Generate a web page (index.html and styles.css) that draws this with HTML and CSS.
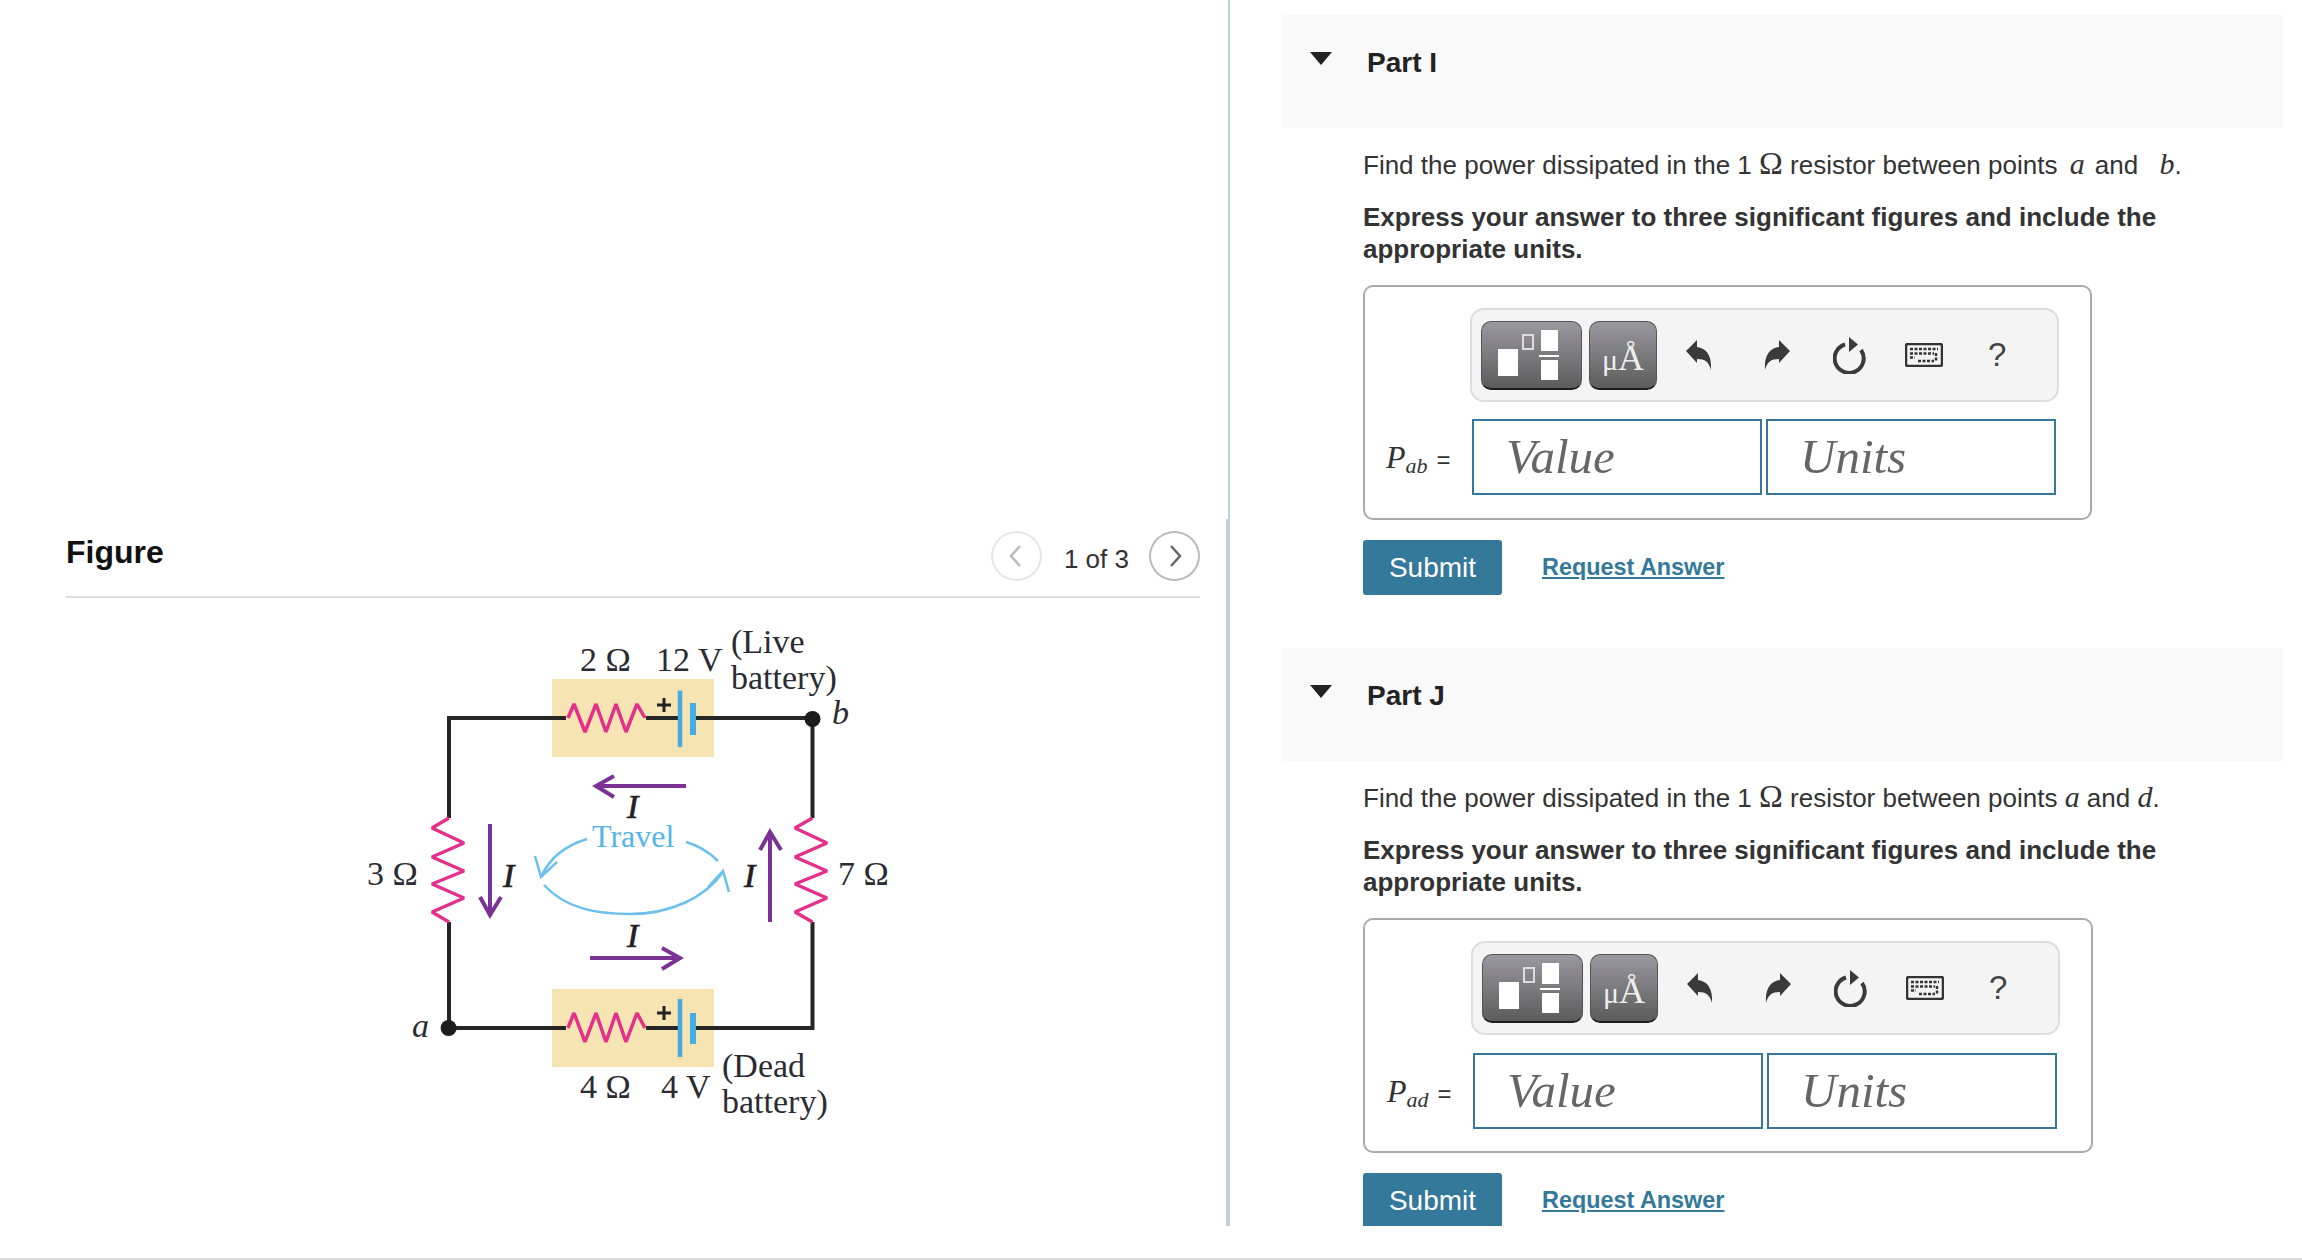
FILE: index.html
```html
<!DOCTYPE html>
<html lang="en">
<head>
<meta charset="utf-8">
<title>Figure and parts</title>
<link rel="stylesheet" href="styles.css">
</head>
<body>
<div class="page">
  <aside class="left">
    <header class="fig-head">
      <h2 class="fig-title">Figure</h2>
      <nav class="pager">
        <span class="nav-btn nav-off"><svg width="16" height="26" viewBox="0 0 16 26"><path d="M12 3 3 13l9 10" class="chev"/></svg></span>
        <span class="pager-text">1 of 3</span>
        <span class="nav-btn nav-on"><svg width="16" height="26" viewBox="0 0 16 26"><path d="M4 3l9 10-9 10" class="chev"/></svg></span>
      </nav>
    </header>
    <div class="figure">
      <svg class="circuit" width="560" height="540" viewBox="340 620 560 540">
        <rect class="tan" x="552" y="679" width="162" height="78"/>
        <rect class="tan" x="552" y="989" width="162" height="78"/>
        <path class="wire" d="M566 718H449V818M646 718H678M693 718H812.5V818M449 922V1028H566M646 1028H678M693 1028H812.5V922"/>
        <circle class="dot" cx="812.5" cy="719" r="8"/>
        <circle class="dot" cx="448.6" cy="1028" r="8"/>
        <path class="res" d="M568 718 574 704 585 732 596 704 606 732 616 704 626 732 637 704 645 718"/>
        <path class="res" d="M568 1028 574 1013 585 1042 596 1013 606 1042 616 1013 626 1042 637 1013 645 1028"/>
        <path class="res" d="M449 818 432 828 464 843 432 857 464 871 432 884 464 898 432 912 449 922"/>
        <path class="res" d="M812.5 818 795 828 827 843 795 857 827 871 795 884 827 898 795 912 812.5 922"/>
        <path class="plate" d="M680 690.5V747M680 999V1057"/>
        <path class="plate wide" d="M693 703V735M693 1013V1044"/>
        <path class="plus" d="M657 705H671M664 698V712M657 1013H671M664 1006V1020"/>
        <path class="arrow" d="M686 786H596M614 776 596 786 614 797"/>
        <path class="arrow" d="M590 958H680M662 948 680 958 662 969"/>
        <path class="arrow" d="M490 824V915M480 897 490 915 501 897"/>
        <path class="arrow" d="M770 922V832M760 850 770 832 781 850"/>
        <path class="loop" d="M587 839C567 845 550 857 541 877M535 856 541 877 557 862M686 842C700 846 710 853 718 861M544 885C565 908 595 914 630 914C670 914 705 898 723 872M708 887 723 871 729 892"/>
        <text class="lbl" x="580" y="671">2 Ω</text>
        <text class="lbl" x="656" y="671">12 V</text>
        <text class="lbl" x="731" y="653">(Live</text>
        <text class="lbl" x="731" y="689">battery)</text>
        <text class="lbl ital" x="832" y="724">b</text>
        <text class="lbl" x="367" y="885">3 Ω</text>
        <text class="lbl" x="838" y="885">7 Ω</text>
        <text class="lbl ital" x="412" y="1037">a</text>
        <text class="lbl" x="580" y="1098">4 Ω</text>
        <text class="lbl" x="661" y="1098">4 V</text>
        <text class="lbl" x="722" y="1077">(Dead</text>
        <text class="lbl" x="722" y="1113">battery)</text>
        <text class="cur" x="627" y="818">I</text>
        <text class="cur" x="627" y="947">I</text>
        <text class="cur" x="503" y="887">I</text>
        <text class="cur" x="744" y="887">I</text>
        <text class="travel" x="592" y="847">Travel</text>
      </svg>
    </div>
  </aside>
  <main class="right">
    <section class="part">
      <header class="part-head"><span class="tri"></span><h3 class="part-title">Part I</h3></header>
      <div class="part-body">
        <p class="q">Find the power dissipated in the 1 <span class="m-om">Ω</span> resistor between points <span class="m m-a">a</span> and <span class="m m-b">b</span>.</p>
        <p class="ins">Express your answer to three significant figures and include the appropriate units.</p>
        <div class="answer">
          <div class="toolbar">
            <span class="tbtn tbtn-tpl"><svg class="tpl" width="99" height="66" viewBox="0 0 99 66"><rect class="wf" x="16" y="27" width="20" height="27"/><rect class="wo" x="41" y="13" width="10" height="14"/><rect class="wf" x="59" y="8" width="17" height="21"/><rect class="wf" x="57" y="33" width="20" height="2"/><rect class="wf" x="59" y="38" width="17" height="20"/></svg></span>
            <span class="tbtn tbtn-unit"><span class="mu">μ</span>Å</span>
            <svg class="ic" width="28" height="32" viewBox="0 0 28 32"><path class="fillic" d="M1 12 12 1v7c9 1 15 8 14 23-2-8-6-11-14-11v4z"/></svg>
            <svg class="ic ic-redo" width="28" height="32" viewBox="0 0 28 32"><path class="fillic" d="M27 12 16 1v7C7 9 1 16 2 31c2-8 6-11 14-11v4z"/></svg>
            <svg class="ic ic-ref" width="33" height="37" viewBox="0 0 33 37"><path class="strokeic" d="M28 13A14.500 14.500 0 1 1 12 7.500"/><path class="fillic" d="M16 0l9 7.500-9 7.500z"/></svg>
            <svg class="ic ic-key" width="38" height="24" viewBox="0 0 38 24"><rect class="keyb" x="1" y="1" width="36" height="22" rx="2"/><path class="keys" d="M5 6h28M5 10.500h24M5 14.500h5M13 18h16M31 10v8"/></svg>
            <span class="help">?</span>
          </div>
          <div class="row">
            <span class="var"><i>P</i><i class="sub">ab</i><span class="eq">=</span></span>
            <div class="field">Value</div>
            <div class="field">Units</div>
          </div>
        </div>
        <div class="actions"><span class="submit">Submit</span><a class="req" href="#">Request Answer</a></div>
      </div>
    </section>
    <section class="part part-j">
      <header class="part-head"><span class="tri"></span><h3 class="part-title">Part J</h3></header>
      <div class="part-body">
        <p class="q">Find the power dissipated in the 1 <span class="m-om">Ω</span> resistor between points <span class="m">a</span> and <span class="m">d</span>.</p>
        <p class="ins">Express your answer to three significant figures and include the appropriate units.</p>
        <div class="answer">
          <div class="toolbar">
            <span class="tbtn tbtn-tpl"><svg class="tpl" width="99" height="66" viewBox="0 0 99 66"><rect class="wf" x="16" y="27" width="20" height="27"/><rect class="wo" x="41" y="13" width="10" height="14"/><rect class="wf" x="59" y="8" width="17" height="21"/><rect class="wf" x="57" y="33" width="20" height="2"/><rect class="wf" x="59" y="38" width="17" height="20"/></svg></span>
            <span class="tbtn tbtn-unit"><span class="mu">μ</span>Å</span>
            <svg class="ic" width="28" height="32" viewBox="0 0 28 32"><path class="fillic" d="M1 12 12 1v7c9 1 15 8 14 23-2-8-6-11-14-11v4z"/></svg>
            <svg class="ic ic-redo" width="28" height="32" viewBox="0 0 28 32"><path class="fillic" d="M27 12 16 1v7C7 9 1 16 2 31c2-8 6-11 14-11v4z"/></svg>
            <svg class="ic ic-ref" width="33" height="37" viewBox="0 0 33 37"><path class="strokeic" d="M28 13A14.500 14.500 0 1 1 12 7.500"/><path class="fillic" d="M16 0l9 7.500-9 7.500z"/></svg>
            <svg class="ic ic-key" width="38" height="24" viewBox="0 0 38 24"><rect class="keyb" x="1" y="1" width="36" height="22" rx="2"/><path class="keys" d="M5 6h28M5 10.500h24M5 14.500h5M13 18h16M31 10v8"/></svg>
            <span class="help">?</span>
          </div>
          <div class="row">
            <span class="var"><i>P</i><i class="sub">ad</i><span class="eq">=</span></span>
            <div class="field">Value</div>
            <div class="field">Units</div>
          </div>
        </div>
        <div class="actions"><span class="submit">Submit</span><a class="req" href="#">Request Answer</a></div>
      </div>
    </section>
  </main>
</div>
</body>
</html>
```
FILE: styles.css
```css
* { box-sizing: border-box; }
html, body { margin: 0; height: 100%; background: #fff; overflow: hidden; }
body { font-family: "Liberation Sans", Arial, sans-serif; color: #333; height: 1260px; border-bottom: 2px solid #ddd; }
.page { display: flex; height: 1226px; overflow: hidden; }
.left { width: 1228px; flex: none; position: relative; padding: 532px 28px 0 66px; }
.left::after { content: ""; position: absolute; right: 0; top: 519px; bottom: 0; width: 2px; background: #c2cfe0; }
.fig-head { display: flex; align-items: center; justify-content: space-between; height: 66px; padding-bottom: 16px; border-bottom: 2px solid #ddd; }
.fig-title { margin: 0 0 8px; font-size: 32px; font-weight: 700; color: #111; line-height: 40px; }
.pager { display: flex; align-items: center; }
.pager-text { font-size: 26px; margin: 6px 20px 0 22px; color: #333; }
.nav-btn { width: 51px; height: 50px; border-radius: 50%; display: flex; align-items: center; justify-content: center; border: 2px solid #bbb; }
.nav-off { border-color: #e6e6e6; }
.chev { fill: none; stroke: #666; stroke-width: 2.5; }
.nav-off .chev { stroke: #bbb; }
.figure { margin: 22px 0 0 274px; }
.circuit { display: block; }
.tan { fill: #f6e5b3; }
.wire { fill: none; stroke: #262626; stroke-width: 4; }
.dot { fill: #1c1c1c; }
.res { fill: none; stroke: #e3308a; stroke-width: 3.500; stroke-linejoin: bevel; }
.plate { fill: none; stroke: #45ade3; stroke-width: 4.500; }
.wide { stroke-width: 6; }
.plus { fill: none; stroke: #222; stroke-width: 3; }
.arrow { fill: none; stroke: #7b3295; stroke-width: 4; }
.loop { fill: none; stroke: #6cc0ec; stroke-width: 2.500; }
.lbl { font-family: "Liberation Serif", serif; font-size: 34px; fill: #2b2b33; }
.ital { font-style: italic; }
.cur { font-family: "Liberation Serif", serif; font-size: 34px; font-style: italic; fill: #222; stroke: #222; stroke-width: 0.7; }
.travel { font-family: "Liberation Serif", serif; font-size: 32px; fill: #55b5e8; }
.right { width: 1074px; flex: none; border-left: 2px solid #c2cfe0; padding: 15px 19px 0 52px; overflow: hidden; height: 1226px; }
.part-head { height: 113px; background: #f9f9f9; display: flex; align-items: flex-start; padding: 32px 0 0 28px; }
.tri { width: 0; height: 0; margin-top: 5px; border-left: 11px solid transparent; border-right: 11px solid transparent; border-top: 13px solid #222; }
.part-title { margin: 0 0 0 35px; font-size: 28px; font-weight: 700; color: #222; line-height: 32px; }
.part-body { padding: 19px 0 0 81px; }
.q, .ins { margin: 0; font-size: 26px; line-height: 32px; color: #333; }
.q { margin-bottom: 20px; }
.ins { font-weight: 700; width: 850px; }
.m { font-family: "Liberation Serif", serif; font-style: italic; font-size: 30px; }
.m-a { margin-left: 5px; margin-right: 3px; }
.m-b { margin-left: 14px; }
.m-om { font-family: "Liberation Serif", serif; font-size: 32px; }
.answer { width: 729px; height: 235px; margin-top: 20px; border: 2px solid #aaa; border-radius: 10px; padding: 21px 0 0 105px; }
.part-j .answer { width: 730px; padding-left: 106px; }
.part-j .row { margin-top: 18px; }
.toolbar { width: 589px; height: 94px; background: #f4f4f4; border: 2px solid #ddd; border-radius: 14px; display: flex; align-items: center; padding-left: 9px; }
.tbtn { height: 69px; border-radius: 10px; background: linear-gradient(#9a98a0, #5c5c5c); border: 1px solid #555; border-bottom: 2px solid #1d1d1d; display: block; }
.tpl { display: block; }
.tbtn-tpl { width: 101px; }
.tbtn-unit { width: 68px; margin-left: 7px; font-family: "Liberation Serif", serif; font-size: 36px; color: #eee; text-align: center; line-height: 72px; }
.mu { font-size: 30px; }
.wf { fill: #fff; }
.wo { fill: none; stroke: #ddd; stroke-width: 2; }
.ic { flex: none; margin-left: 28px; }
.ic-redo { margin-left: 50px; }
.ic-ref { margin-left: 42px; }
.ic-key { margin-left: 39px; }
.fillic { fill: #3a3a3a; }
.strokeic { fill: none; stroke: #3a3a3a; stroke-width: 4; }
.keyb { fill: #f4f4f4; stroke: #333; stroke-width: 2.500; }
.keys { fill: none; stroke: #333; stroke-width: 2.500; stroke-dasharray: 3 1.500; }
.help { font-size: 33px; color: #444; margin-left: 45px; }
.row { display: flex; align-items: center; margin-top: 17px; }
.var { width: 86px; margin-left: -84px; display: flex; align-items: baseline; font-family: "Liberation Serif", serif; font-size: 32px; color: #333; flex: none; }
.sub { font-size: 22px; position: relative; top: 5px; }
.eq { font-family: "Liberation Sans", sans-serif; font-size: 24px; margin-left: 9px; }
.field { width: 290px; height: 76px; border: 2px solid #34789a; font-family: "Liberation Serif", serif; font-style: italic; font-size: 49px; color: #666; padding-left: 32px; line-height: 72px; margin-right: 4px; flex: none; }
.actions { display: flex; align-items: center; margin-top: 20px; }
.submit { width: 139px; height: 55px; background: #34789a; color: #fff; border-radius: 3px; font-size: 28px; text-align: center; line-height: 55px; }
.req { margin-left: 40px; font-size: 23.400px; font-weight: 700; color: #34789a; }
.part-j { margin-top: 53px; }
```
